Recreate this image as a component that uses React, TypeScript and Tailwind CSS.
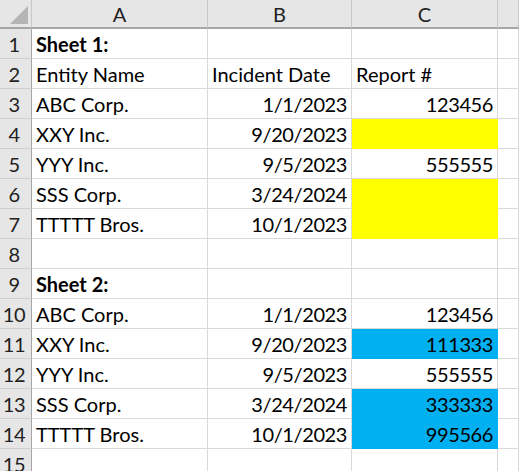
import React from "react";

type Cell = { v: string; bold?: boolean; right?: boolean; bg?: string };
type Row = [Cell, Cell, Cell];

const E: Cell = { v: "" };
const rows: Row[] = [
  [{ v: "Sheet 1:", bold: true }, E, E],
  [{ v: "Entity Name" }, { v: "Incident Date" }, { v: "Report #" }],
  [{ v: "ABC Corp." }, { v: "1/1/2023", right: true }, { v: "123456", right: true }],
  [{ v: "XXY Inc." }, { v: "9/20/2023", right: true }, { v: "", bg: "y" }],
  [{ v: "YYY Inc." }, { v: "9/5/2023", right: true }, { v: "555555", right: true }],
  [{ v: "SSS Corp." }, { v: "3/24/2024", right: true }, { v: "", bg: "y" }],
  [{ v: "TTTTT Bros." }, { v: "10/1/2023", right: true }, { v: "", bg: "y" }],
  [E, E, E],
  [{ v: "Sheet 2:", bold: true }, E, E],
  [{ v: "ABC Corp." }, { v: "1/1/2023", right: true }, { v: "123456", right: true }],
  [{ v: "XXY Inc." }, { v: "9/20/2023", right: true }, { v: "111333", right: true, bg: "b" }],
  [{ v: "YYY Inc." }, { v: "9/5/2023", right: true }, { v: "555555", right: true }],
  [{ v: "SSS Corp." }, { v: "3/24/2024", right: true }, { v: "333333", right: true, bg: "b" }],
  [{ v: "TTTTT Bros." }, { v: "10/1/2023", right: true }, { v: "995566", right: true, bg: "b" }],
  [E, E, E],
];

function DataCell({ c }: { c: Cell }) {
  const bg =
    c.bg === "y"
      ? "bg-[#ffff00] border-[#ffff00]"
      : c.bg === "b"
      ? "bg-[#00b0f0] border-[#00b0f0]"
      : "bg-white border-[#d9d9d9]";
  return (
    <div
      className={`h-[30px] border-r border-b flex items-end pb-[2px] px-[4px] whitespace-nowrap overflow-hidden ${bg} ${
        c.right ? "justify-end tracking-[-0.4px]" : "justify-start"
      } ${c.bold ? "font-bold" : ""}`}
    >
      {c.v}
    </div>
  );
}

export default function App() {
  return (
    <div
      className="w-[519px] h-[471px] overflow-hidden bg-white text-black text-[20px] leading-[24px]"
      style={{ fontFamily: "Lato, 'Open Sans', sans-serif" }}
    >
      <div className="grid grid-cols-[32px_176px_144px_146px_1fr]">
        <div className="h-[29px] bg-[#e6e6e6] border-r border-b-2 border-r-[#c8c8c8] border-b-[#a6a6a6] relative">
          <svg className="absolute right-[3px] bottom-[3px]" width="18" height="18" viewBox="0 0 18 18">
            <polygon points="18,0 18,18 0,18" fill="#b5b5b5" />
          </svg>
        </div>
        {["A", "B", "C", ""].map((h, i) => (
          <div
            key={i}
            className="h-[29px] bg-[#e6e6e6] border-r border-b-2 border-r-[#c8c8c8] border-b-[#a6a6a6] flex items-center justify-center text-[#222]"
          >
            {h}
          </div>
        ))}
        {rows.map((r, i) => (
          <React.Fragment key={i}>
            <div className="h-[30px] bg-[#e6e6e6] border-r border-b border-r-[#a6a6a6] border-b-[#cfcfcf] flex items-end pb-[2px] justify-center pr-[3px] text-[#222] tracking-[-0.4px]">
              {i + 1}
            </div>
            <DataCell c={r[0]} />
            <DataCell c={r[1]} />
            <DataCell c={r[2]} />
            <DataCell c={E} />
          </React.Fragment>
        ))}
      </div>
    </div>
  );
}
